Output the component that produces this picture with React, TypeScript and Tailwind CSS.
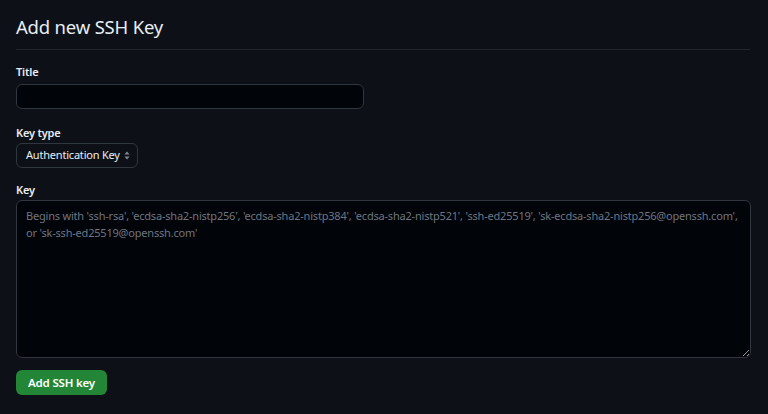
export default function App() {
  const placeholder =
    "Begins with 'ssh-rsa', 'ecdsa-sha2-nistp256', 'ecdsa-sha2-nistp384', 'ecdsa-sha2-nistp521', 'ssh-ed25519', 'sk-ecdsa-sha2-nistp256@openssh.com', or 'sk-ssh-ed25519@openssh.com'"

  return (
    <div
      className="min-h-[414px] bg-[#0d1117] px-4 text-[#e6edf3]"
      style={{ fontFamily: '"Noto Sans", "Open Sans", sans-serif' }}
    >
      {/* Header */}
      <div className="flex h-[50px] items-end border-b border-[#21262d] pb-[9px] mr-[2px]">
        <h1 className="text-[18.5px] leading-[26px] font-normal tracking-[-0.2px]">Add new SSH Key</h1>
      </div>

      <form className="flex flex-col pt-[13px] tracking-[-0.2px]" onSubmit={(e) => e.preventDefault()}>
        {/* Title */}
        <label className="text-[11px] font-semibold leading-[18px]">Title</label>
        <input
          type="text"
          className="mt-[3px] h-[25px] w-[348px] rounded-[6px] border border-[#30363d] bg-[#010409] px-2 text-[11px] outline-none"
        />

        {/* Key type */}
        <label className="mt-[15px] text-[11px] font-semibold leading-[18px]">Key type</label>
        <div className="mt-[1px] flex h-[25px] w-[122px] items-center justify-between rounded-[6px] border border-[#30363d] bg-[#0d1117] pl-[9px] pr-[7px]">
          <span className="whitespace-nowrap text-[11px] text-[#e6edf3]">Authentication Key</span>
          <svg width="6" height="9" viewBox="0 0 6 9" className="fill-[#7d8590]">
            <path d="M3 0.5 L5.6 3.6 H0.4 Z" />
            <path d="M3 8.5 L5.6 5.4 H0.4 Z" />
          </svg>
        </div>

        {/* Key */}
        <label className="mt-[13px] text-[11px] font-semibold leading-[18px]">Key</label>
        <textarea
          placeholder={placeholder}
          className="mt-[1px] h-[158px] w-[735px] resize-y rounded-[6px] border border-[#30363d] bg-[#010409] px-[9px] py-[7px] text-[11px] leading-[16.5px] text-[#e6edf3] outline-none placeholder:text-[#6e7681]"
        />

        <div className="mt-[11px]">
          <button
            type="submit"
            className="h-[25px] w-[91px] rounded-[6px] bg-[#238636] text-[11.5px] font-semibold text-white"
          >
            Add SSH key
          </button>
        </div>
      </form>
    </div>
  )
}
